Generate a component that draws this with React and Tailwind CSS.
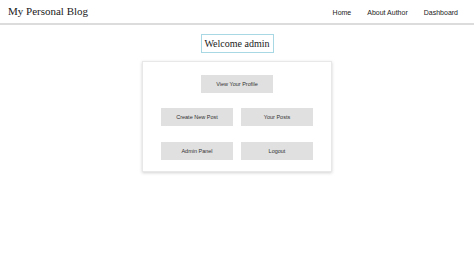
export default function App() {
  return (
    <div className="min-h-screen bg-white">
      <header className="flex h-[25px] items-center justify-between border-b-2 border-[#dcdcdc] pl-2 pr-4">
        <h1 className="text-[11px] leading-none text-[#1a1a1a] [font-family:'Liberation_Serif',serif]">My Personal Blog</h1>
        <nav className="flex items-center gap-4 pt-[3px] text-[7px] text-[#222] [font-family:'Liberation_Sans',sans-serif]">
          <a href="#">Home</a>
          <a href="#">About Author</a>
          <a href="#">Dashboard</a>
        </nav>
      </header>
      <main className="flex flex-col items-center pt-[9px]">
        <div className="flex h-[19px] w-[73px] items-center justify-center border border-[#a8d8e4] text-[10px] text-[#1a1a1a] [font-family:'Liberation_Serif',serif]">
          Welcome admin
        </div>
        <div className="mt-2 flex w-[190px] flex-col items-center border border-[#e8e8e8] pt-[13px] pb-[11px] shadow-[0_1px_3px_rgba(0,0,0,0.18)] [font-family:'Liberation_Sans',sans-serif]">
          <button className="h-[18px] w-[72px] bg-[#e0e0e0] text-[5.5px] text-[#333]">View Your Profile</button>
          <div className="mt-[15px] flex gap-2">
            <button className="h-[18px] w-[72px] bg-[#e0e0e0] text-[5.5px] text-[#333]">Create New Post</button>
            <button className="h-[18px] w-[72px] bg-[#e0e0e0] text-[5.5px] text-[#333]">Your Posts</button>
          </div>
          <div className="mt-4 flex gap-2">
            <button className="h-[18px] w-[72px] bg-[#e0e0e0] text-[5.5px] text-[#333]">Admin Panel</button>
            <button className="h-[18px] w-[72px] bg-[#e0e0e0] text-[5.5px] text-[#333]">Logout</button>
          </div>
        </div>
      </main>
    </div>
  );
}
